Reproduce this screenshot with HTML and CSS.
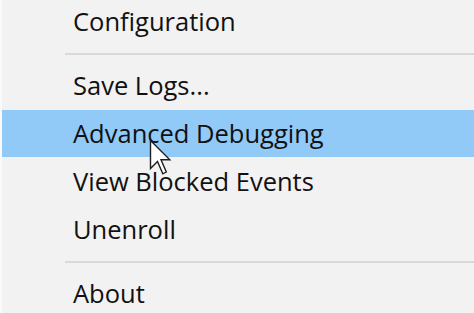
FILE: index.html
```html
<!DOCTYPE html>
<html>
<head>
<meta charset="utf-8">
<link rel="stylesheet" href="styles.css">
</head>
<body>
<div class="menu">
  <div class="item">Configuration</div>
  <div class="sep"><div class="line"></div></div>
  <div class="item">Save Logs...</div>
  <div class="item hot">Advanced Debugging
    <svg class="cursor" width="24" height="38" viewBox="0 0 24 38">
      <path d="M1.5 1.5 L1.5 29.5 L8.5 22.5 L13.8 34.8 L17.3 33 L12 20.8 L20.8 20.8 Z" fill="#fff" stroke="#1e1e1e" stroke-width="1.4" stroke-linejoin="miter"/>
    </svg>
  </div>
  <div class="item">View Blocked Events</div>
  <div class="item">Unenroll</div>
  <div class="sep"><div class="line"></div></div>
  <div class="item">About</div>
</div>
</body>
</html>
```
FILE: styles.css
```css
html, body {
  margin: 0;
  padding: 0;
  background: #f2f2f2;
  overflow: hidden;
}
.menu {
  width: 474px;
  height: 330px;
  margin-top: -2px;
  box-sizing: border-box;
  border-left: 2px solid #fafafa;
  background: #f2f2f2;
  font-family: "Open Sans", "Noto Sans", sans-serif;
  font-size: 25.5px;
  color: #111;
}
.item {
  position: relative;
  height: 48px;
  line-height: 46px;
  padding-left: 71px;
  white-space: nowrap;
}
.item.hot {
  background: #91c9f7;
  height: 47px;
  margin-bottom: 1px;
}
.sep {
  height: 16px;
  display: flex;
  align-items: center;
  padding-left: 63px;
}
.line {
  flex: 1;
  height: 2px;
  background: #d9d9d9;
}
.cursor {
  position: absolute;
  left: 147px;
  top: 29px;
}
```
